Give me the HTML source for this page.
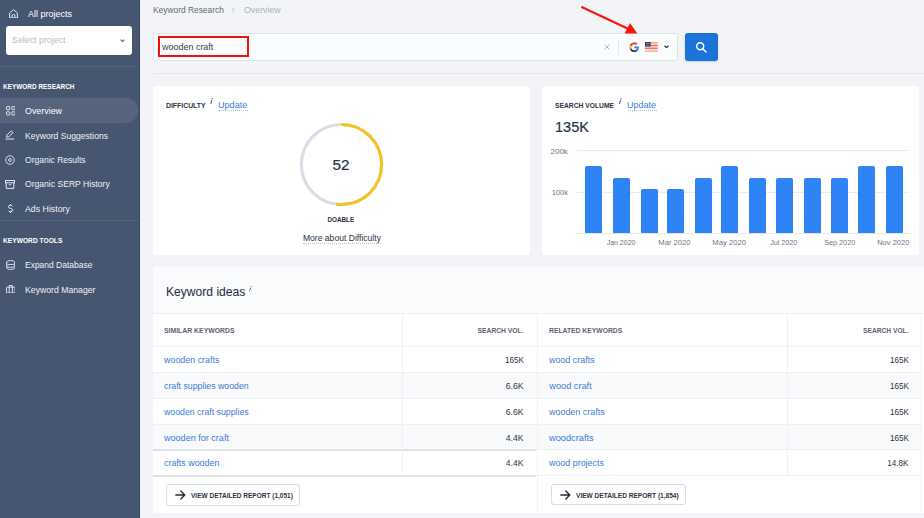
<!DOCTYPE html>
<html><head><meta charset="utf-8">
<style>
*{box-sizing:border-box;margin:0;padding:0}
html,body{width:924px;height:518px;overflow:hidden;background:#f3f4f7;font-family:"Liberation Sans",sans-serif}
.a{position:absolute}
.t{position:absolute;white-space:nowrap;line-height:1}
</style></head><body>
<!-- sidebar -->
<div class="a" style="left:0;top:0;width:139.4px;height:518px;background:#475670"></div>
<div class="a" style="left:139.3px;top:0;width:1.1px;height:518px;background:#3b475c"></div>
<svg class="a" style="left:9.3px;top:8.7px" width="9" height="9.5" viewBox="0 0 9 9.5" fill="none" stroke="#e3e6ec" stroke-width="1" stroke-linejoin="round"><path d="M0.6 3.9 L4.5 0.6 L8.4 3.9 V8.9 H0.6 Z"/><path d="M3.1 8.9 V5.9 Q4.5 4.9 5.9 5.9 V8.9"/></svg>
<div class="a" style="left:5.6px;top:26px;width:126.1px;height:28.5px;background:#fff;border-radius:3px"></div>
<svg class="a" style="left:119.5px;top:38.6px" width="5" height="3.6" viewBox="0 0 5 3.6" fill="none" stroke="#5a6272" stroke-width="1.15"><path d="M0.6 0.6 L2.5 2.6 L4.4 0.6"/></svg>
<div class="a" style="left:0;top:66.2px;width:139.4px;height:1px;background:#55637a"></div>
<div class="a" style="left:0;top:98px;width:138px;height:24.5px;background:#56657d;border-radius:0 12.25px 12.25px 0"></div>
<svg class="a" style="left:5.8px;top:106px" width="9.5" height="9.5" viewBox="0 0 9.5 9.5" fill="none" stroke="#e3e6ec" stroke-width="0.95"><rect x="0.5" y="0.5" width="3.2" height="3.2" rx="0.5"/><rect x="5.8" y="0.5" width="3.2" height="3.2" rx="0.5"/><rect x="0.5" y="5.8" width="3.2" height="3.2" rx="0.5"/><rect x="5.8" y="5.8" width="3.2" height="3.2" rx="0.5"/></svg>
<svg class="a" style="left:5px;top:129.5px" width="10" height="10" viewBox="0 0 10 10" fill="none" stroke="#e3e6ec" stroke-width="1"><path d="M0.5 9 H9"/><path d="M1.5 7 L1.8 5.2 L5.8 1.2 Q6.3 0.8 6.8 1.2 L7.6 2 Q8 2.5 7.6 3 L3.6 7 Z"/></svg>
<svg class="a" style="left:5.4px;top:154.7px" width="10" height="10" viewBox="0 0 10 10" fill="none" stroke="#e3e6ec" stroke-width="0.95"><circle cx="5" cy="5" r="4.2"/><circle cx="5" cy="5" r="1.4"/></svg>
<svg class="a" style="left:5px;top:179.8px" width="10" height="9" viewBox="0 0 10 9" fill="none" stroke="#e3e6ec" stroke-width="1"><rect x="0.5" y="0.5" width="9" height="2.3"/><path d="M1.2 2.8 V8.4 H8.8 V2.8"/><path d="M3.8 4.8 H6.2"/></svg>
<svg class="a" style="left:7px;top:204px" width="7" height="9" viewBox="0 0 7 9" fill="none" stroke="#e3e6ec" stroke-width="1"><path d="M5.6 2.4 Q5.2 1.3 3.5 1.3 Q1.4 1.3 1.4 2.8 Q1.4 4.1 3.5 4.4 Q5.7 4.7 5.7 6.2 Q5.7 7.7 3.5 7.7 Q1.7 7.7 1.2 6.5"/><path d="M3.5 0 V1.3 M3.5 7.7 V9"/></svg>
<div class="a" style="left:0;top:220px;width:139.4px;height:1px;background:#55637a"></div>
<svg class="a" style="left:5.8px;top:259.7px" width="9.4" height="10" viewBox="0 0 9.4 10" fill="none" stroke="#e3e6ec" stroke-width="0.95"><path d="M0.7 2.1 Q0.7 0.6 4.7 0.6 Q8.7 0.6 8.7 2.1 V7.9 Q8.7 9.4 4.7 9.4 Q0.7 9.4 0.7 7.9 Z"/><path d="M0.7 3.4 Q0.7 4.6 4.7 4.6 Q8.7 4.6 8.7 3.4"/><path d="M0.7 6.1 Q0.7 7.3 4.7 7.3 Q8.7 7.3 8.7 6.1"/></svg>
<svg class="a" style="left:5.8px;top:284.9px" width="9.6" height="8.4" viewBox="0 0 9.6 8.4" fill="none" stroke="#e3e6ec" stroke-width="0.95"><rect x="0.5" y="2.2" width="8.6" height="5.7" rx="0.5"/><path d="M3.2 2.2 V0.5 H6.4 V2.2"/><path d="M3.2 2.2 V7.9 M6.4 2.2 V7.9"/></svg>

<!-- top search -->
<svg class="a" style="left:231px;top:7px" width="5" height="6" viewBox="0 0 5 6" fill="none" stroke="#b8bec8" stroke-width="0.9"><path d="M1 0.7 L3.5 3 L1 5.3"/></svg>
<div class="a" style="left:153px;top:33px;width:524.5px;height:28px;background:#fbfcfd;border:1px solid #dfe2e8;border-radius:3px"></div>
<div class="a" style="left:157.6px;top:35.9px;width:91.4px;height:21.2px;border:2px solid #f0100c"></div>
<svg class="a" style="left:604px;top:44px" width="6" height="6" viewBox="0 0 6 6" stroke="#a9afba" stroke-width="0.9"><path d="M0.5 0.5 L5.5 5.5 M5.5 0.5 L0.5 5.5"/></svg>
<div class="a" style="left:618px;top:39px;width:1px;height:16px;background:#e3e6eb"></div>
<svg class="a" style="left:629.2px;top:42.2px" width="10.5" height="10.5" viewBox="0 0 24 24"><path fill="#4285F4" d="M22.6 12.3c0-.8-.1-1.5-.2-2.3H12v4.3h6a5.1 5.1 0 0 1-2.2 3.3v2.8h3.6c2.1-1.9 3.2-4.8 3.2-8.1z"/><path fill="#40475a" d="M12 23c3 0 5.5-1 7.4-2.7l-3.6-2.8c-1 .7-2.3 1.1-3.8 1.1-2.9 0-5.4-2-6.3-4.6H2v2.9A11 11 0 0 0 12 23z"/><path fill="#FBBC05" d="M5.7 14c-.2-.7-.4-1.4-.4-2.1s.1-1.4.4-2.1V7H2a11 11 0 0 0 0 9.9L5.7 14z"/><path fill="#EA4335" d="M12 5.4c1.6 0 3.1.6 4.3 1.7l3.2-3.2A11 11 0 0 0 2 7l3.7 2.9C6.6 7.3 9.1 5.4 12 5.4z"/></svg>
<svg class="a" style="left:645.2px;top:42px" width="12.8" height="9.8" viewBox="0 0 12.8 9.8"><rect width="12.8" height="9.8" fill="#fbe4e0"/><rect y="0" width="12.8" height="1.4" fill="#f4a196"/><rect y="2.8" width="12.8" height="1.4" fill="#f06a5c"/><rect y="5.6" width="12.8" height="1.4" fill="#f26e60"/><rect y="8.4" width="12.8" height="1.4" fill="#f4b0a6"/><rect width="5.6" height="4.6" fill="#2f3d5a"/><rect x="1" y="1.2" width="3.6" height="0.6" fill="#b9c1d0"/><rect x="1" y="2.8" width="3.6" height="0.6" fill="#8f9ab0"/></svg>
<svg class="a" style="left:663.8px;top:44.8px" width="5" height="3.6" viewBox="0 0 5 3.6" fill="none" stroke="#2b3443" stroke-width="1.25"><path d="M0.6 0.7 L2.5 2.6 L4.4 0.7"/></svg>
<div class="a" style="left:685px;top:33px;width:33px;height:28px;background:#1b72d8;border-radius:3px;box-shadow:0 1px 2px rgba(27,114,216,0.25)"></div>
<svg class="a" style="left:694.5px;top:41px" width="13" height="13" viewBox="0 0 13 13" fill="none" stroke="#fff" stroke-width="1.45" stroke-linecap="round"><circle cx="5.2" cy="5.2" r="3.5"/><path d="M7.8 7.8 L11 11"/></svg>
<div class="a" style="left:153px;top:73.2px;width:771px;height:1px;background:#e5e7ec"></div>
<svg class="a" style="left:0;top:0" width="924" height="34" viewBox="0 0 924 34"><path d="M582.2 7.2 L628 28.7" stroke="#f8140a" stroke-width="2.3" stroke-linecap="round"/><path d="M637.3 33.5 L624.6 33.6 L630 23 Z" fill="#f8140a"/></svg>

<!-- cards -->
<div class="a" style="left:153px;top:86.1px;width:376.7px;height:168.6px;background:#fff;border-radius:3px"></div>
<div class="a" style="left:542.3px;top:86.1px;width:376.6px;height:168.6px;background:#fff;border-radius:3px"></div>
<div class="a" style="left:218.5px;top:110px;width:29.5px;height:0;border-top:1px dotted #9fc0ea"></div>
<div class="a" style="left:627.5px;top:110px;width:29.5px;height:0;border-top:1px dotted #9fc0ea"></div>
<svg class="a" style="left:299px;top:122px" width="85" height="85" viewBox="0 0 85 85" fill="none" stroke-width="3"><circle cx="42.5" cy="42.5" r="40.1" stroke="#d9dce5"/><circle cx="42.5" cy="42.5" r="40.1" stroke="#f4c322" stroke-dasharray="131.0 400" transform="rotate(-90 42.5 42.5)"/></svg>
<div class="a" style="left:302.5px;top:243px;width:78px;height:0;border-top:1px dotted #b9c0ca"></div>
<!-- chart -->
<div class="a" style="left:577px;top:150px;width:333px;height:1px;background:#e9ebf0"></div>
<div class="a" style="left:577px;top:191.5px;width:333px;height:1px;background:#e9ebf0"></div>
<div class="a" style="left:577px;top:232.5px;width:333px;height:1px;background:#e3e6ec"></div>
<div class="a" style="left:585.1px;top:165.50px;width:17px;height:67.20px;background:#2e83f6;border-radius:2px 2px 0 0"></div>
<div class="a" style="left:613.0px;top:177.90px;width:17px;height:54.80px;background:#2e83f6;border-radius:2px 2px 0 0"></div>
<div class="a" style="left:641.0px;top:188.60px;width:17px;height:44.10px;background:#2e83f6;border-radius:2px 2px 0 0"></div>
<div class="a" style="left:666.7px;top:188.60px;width:17px;height:44.10px;background:#2e83f6;border-radius:2px 2px 0 0"></div>
<div class="a" style="left:694.5px;top:177.90px;width:17px;height:54.80px;background:#2e83f6;border-radius:2px 2px 0 0"></div>
<div class="a" style="left:721.4px;top:165.50px;width:17px;height:67.20px;background:#2e83f6;border-radius:2px 2px 0 0"></div>
<div class="a" style="left:749.1px;top:177.90px;width:17px;height:54.80px;background:#2e83f6;border-radius:2px 2px 0 0"></div>
<div class="a" style="left:775.5px;top:177.90px;width:17px;height:54.80px;background:#2e83f6;border-radius:2px 2px 0 0"></div>
<div class="a" style="left:803.9px;top:177.90px;width:17px;height:54.80px;background:#2e83f6;border-radius:2px 2px 0 0"></div>
<div class="a" style="left:831.4px;top:177.90px;width:17px;height:54.80px;background:#2e83f6;border-radius:2px 2px 0 0"></div>
<div class="a" style="left:857.6px;top:165.50px;width:17px;height:67.20px;background:#2e83f6;border-radius:2px 2px 0 0"></div>
<div class="a" style="left:886.0px;top:165.50px;width:17px;height:67.20px;background:#2e83f6;border-radius:2px 2px 0 0"></div>

<svg class="a" style="left:0;top:0;overflow:visible" width="1" height="1"><circle cx="212.2" cy="98.6" r="0.6" fill="#3f4858"/><path d="M211.7 100.4 L210.9 103.6" stroke="#3f4858" stroke-width="0.95" stroke-linecap="round"/></svg>
<svg class="a" style="left:0;top:0;overflow:visible" width="1" height="1"><circle cx="621.1" cy="98.6" r="0.6" fill="#3f4858"/><path d="M620.6 100.3 L619.5 103.6" stroke="#3f4858" stroke-width="0.95" stroke-linecap="round"/></svg>
<!-- keyword ideas -->
<div class="a" style="left:153px;top:267.3px;width:771px;height:246px;background:#fff;border-radius:3px 0 0 3px;overflow:hidden">
  <div class="a" style="left:0;top:0;width:771px;height:46px;background:#fafbfc"></div>
</div>
<div class="a" style="left:153px;top:313px;width:771px;height:1px;background:#eff1f5"></div>
<div class="a" style="left:153px;top:372.1px;width:768px;height:26.1px;background:#f9fafc"></div>
<div class="a" style="left:153px;top:424.1px;width:768px;height:25.8px;background:#f9fafc"></div>
<div class="a" style="left:153px;top:345.8px;width:768px;height:1px;background:#eff1f5"></div>
<div class="a" style="left:153px;top:371.6px;width:768px;height:1px;background:#eff1f5"></div>
<div class="a" style="left:153px;top:397.7px;width:768px;height:1px;background:#eff1f5"></div>
<div class="a" style="left:153px;top:423.6px;width:768px;height:1px;background:#eff1f5"></div>
<div class="a" style="left:153px;top:449.4px;width:768px;height:1px;background:#eff1f5"></div>
<div class="a" style="left:537px;top:475.2px;width:384px;height:1px;background:#eff1f5"></div>
<div class="a" style="left:153px;top:448.8px;width:383px;height:2px;background:#dfe2e8"></div>
<div class="a" style="left:153px;top:474.8px;width:383px;height:2px;background:#dfe2e8"></div>
<div class="a" style="left:402px;top:313.5px;width:1px;height:162px;background:#eff1f5"></div>
<div class="a" style="left:536.5px;top:313.5px;width:1px;height:199px;background:#eff1f5"></div>
<div class="a" style="left:786.5px;top:313.5px;width:1px;height:162px;background:#eff1f5"></div>
<div class="a" style="left:920.5px;top:313.5px;width:1px;height:199px;background:#eff1f5"></div>
<div class="a" style="left:165.6px;top:484.3px;width:134.0px;height:21.4px;border:1px solid #d8dce3;border-radius:3px;background:#fff"></div>
<div class="a" style="left:550.9px;top:484.4px;width:134.8px;height:21.0px;border:1px solid #d8dce3;border-radius:3px;background:#fff"></div>
<svg class="a" style="left:175px;top:490px" width="11" height="10" viewBox="0 0 11 10" fill="none" stroke="#1f2a3c" stroke-width="1.3" stroke-linecap="round" stroke-linejoin="round"><path d="M0.8 5 H9.8 M5.8 1 L9.8 5 L5.8 9"/></svg>
<svg class="a" style="left:560.2px;top:490px" width="11" height="10" viewBox="0 0 11 10" fill="none" stroke="#1f2a3c" stroke-width="1.3" stroke-linecap="round" stroke-linejoin="round"><path d="M0.8 5 H9.8 M5.8 1 L9.8 5 L5.8 9"/></svg>
<svg class="a" style="left:0;top:0;overflow:visible" width="1" height="1"><circle cx="251.2" cy="286.4" r="0.5" fill="#3f4858"/><path d="M250.7 288.2 L249.6 290.5" stroke="#3f4858" stroke-width="0.8" stroke-linecap="round"/></svg>

<div class="t" style="top:9.27px;font-size:9.6px;font-weight:normal;color:#ffffff;left:27.80px;transform-origin:0 0;transform:scaleX(0.9372);">All projects</div>
<div class="t" style="top:35.95px;font-size:8.8px;font-weight:normal;color:#b7bcc6;left:11.50px;transform-origin:0 0;transform:scaleX(1.0035);">Select project</div>
<div class="t" style="top:82.74px;font-size:7.4px;font-weight:bold;color:#ffffff;left:2.70px;transform-origin:0 0;transform:scaleX(0.8708);">KEYWORD RESEARCH</div>
<div class="t" style="top:106.07px;font-size:9.6px;font-weight:normal;color:#ffffff;left:24.70px;transform-origin:0 0;transform:scaleX(0.9248);">Overview</div>
<div class="t" style="top:130.54px;font-size:9.4px;font-weight:normal;color:#eef0f4;left:24.80px;transform-origin:0 0;transform:scaleX(0.9151);">Keyword Suggestions</div>
<div class="t" style="top:154.94px;font-size:9.4px;font-weight:normal;color:#eef0f4;left:24.80px;transform-origin:0 0;transform:scaleX(0.9092);">Organic Results</div>
<div class="t" style="top:179.24px;font-size:9.4px;font-weight:normal;color:#eef0f4;left:24.80px;transform-origin:0 0;transform:scaleX(0.9158);">Organic SERP History</div>
<div class="t" style="top:203.84px;font-size:9.4px;font-weight:normal;color:#eef0f4;left:24.80px;transform-origin:0 0;transform:scaleX(0.9364);">Ads History</div>
<div class="t" style="top:236.74px;font-size:7.4px;font-weight:bold;color:#ffffff;left:2.60px;transform-origin:0 0;transform:scaleX(0.8992);">KEYWORD TOOLS</div>
<div class="t" style="top:260.24px;font-size:9.4px;font-weight:normal;color:#eef0f4;left:24.80px;transform-origin:0 0;transform:scaleX(0.9046);">Expand Database</div>
<div class="t" style="top:284.54px;font-size:9.4px;font-weight:normal;color:#eef0f4;left:24.80px;transform-origin:0 0;transform:scaleX(0.9268);">Keyword Manager</div>
<div class="t" style="top:5.62px;font-size:8.6px;font-weight:normal;color:#5f6979;left:153.30px;transform-origin:0 0;transform:scaleX(0.9758);">Keyword Research</div>
<div class="t" style="top:5.62px;font-size:8.6px;font-weight:normal;color:#aab1bd;left:243.90px;transform-origin:0 0;transform:scaleX(1.0240);">Overview</div>
<div class="t" style="top:43.21px;font-size:9.2px;font-weight:normal;color:#343c4b;left:161.90px;transform-origin:0 0;transform:scaleX(0.9758);">wooden craft</div>
<div class="t" style="top:101.50px;font-size:7.8px;font-weight:bold;color:#2b3443;left:165.60px;transform-origin:0 0;transform:scaleX(0.8816);">DIFFICULTY</div>
<div class="t" style="top:99.71px;font-size:9.8px;font-weight:normal;color:#3a7bd5;left:218.40px;transform-origin:0 0;transform:scaleX(0.9272);">Update</div>
<div class="t" style="top:158.13px;font-size:14.5px;font-weight:normal;color:#26314a;left:333.44px;transform-origin:50% 0;transform:scaleX(1.0540);-webkit-text-stroke:0.2px #26314a;">52</div>
<div class="t" style="top:216.38px;font-size:7.0px;font-weight:bold;color:#2b3443;left:326.42px;transform-origin:50% 0;transform:scaleX(0.9068);">DOABLE</div>
<div class="t" style="top:233.58px;font-size:9.0px;font-weight:normal;color:#2b3443;left:300.56px;transform-origin:50% 0;transform:scaleX(0.9527);">More about Difficulty</div>
<div class="t" style="top:101.50px;font-size:7.8px;font-weight:bold;color:#2b3443;left:554.70px;transform-origin:0 0;transform:scaleX(0.8617);">SEARCH VOLUME</div>
<div class="t" style="top:99.71px;font-size:9.8px;font-weight:normal;color:#3a7bd5;left:627.40px;transform-origin:0 0;transform:scaleX(0.9177);">Update</div>
<div class="t" style="top:119.53px;font-size:14.5px;font-weight:normal;color:#26314a;left:554.70px;transform-origin:0 0;transform:scaleX(1.0040);-webkit-text-stroke:0.2px #26314a;">135K</div>
<div class="t" style="top:148.00px;font-size:7.8px;font-weight:normal;color:#6b7485;left:551.08px;transform-origin:100% 0;transform:scaleX(1.0346);">200k</div>
<div class="t" style="top:189.40px;font-size:7.8px;font-weight:normal;color:#6b7485;left:551.08px;transform-origin:100% 0;transform:scaleX(0.9577);">100k</div>
<div class="t" style="top:238.50px;font-size:7.8px;font-weight:normal;color:#6b7485;left:605.05px;transform-origin:50% 0;transform:scaleX(0.8973);">Jan 2020</div>
<div class="t" style="top:238.50px;font-size:7.8px;font-weight:normal;color:#6b7485;left:658.42px;transform-origin:50% 0;transform:scaleX(0.9802);">Mar 2020</div>
<div class="t" style="top:238.50px;font-size:7.8px;font-weight:normal;color:#6b7485;left:712.27px;transform-origin:50% 0;transform:scaleX(0.9838);">May 2020</div>
<div class="t" style="top:238.50px;font-size:7.8px;font-weight:normal;color:#6b7485;left:769.45px;transform-origin:50% 0;transform:scaleX(0.9190);">Jul 2020</div>
<div class="t" style="top:238.50px;font-size:7.8px;font-weight:normal;color:#6b7485;left:822.80px;transform-origin:50% 0;transform:scaleX(0.9312);">Sep 2020</div>
<div class="t" style="top:238.50px;font-size:7.8px;font-weight:normal;color:#6b7485;left:876.41px;transform-origin:100% 0;transform:scaleX(0.9644);">Nov 2020</div>
<div class="t" style="top:284.80px;font-size:13.0px;font-weight:normal;color:#1f2a3c;left:165.90px;transform-origin:0 0;transform:scaleX(0.9300);">Keyword ideas</div>
<div class="t" style="top:326.74px;font-size:7.4px;font-weight:bold;color:#596376;left:164.40px;transform-origin:0 0;transform:scaleX(0.9283);">SIMILAR KEYWORDS</div>
<div class="t" style="top:326.74px;font-size:7.4px;font-weight:bold;color:#596376;left:473.43px;transform-origin:100% 0;transform:scaleX(0.9096);">SEARCH VOL.</div>
<div class="t" style="top:326.74px;font-size:7.4px;font-weight:bold;color:#596376;left:549.30px;transform-origin:0 0;transform:scaleX(0.9159);">RELATED KEYWORDS</div>
<div class="t" style="top:326.74px;font-size:7.4px;font-weight:bold;color:#596376;left:858.13px;transform-origin:100% 0;transform:scaleX(0.8997);">SEARCH VOL.</div>
<div class="t" style="top:355.81px;font-size:9.2px;font-weight:normal;color:#3a7bd5;left:164.30px;transform-origin:0 0;transform:scaleX(0.9690);">wooden crafts</div>
<div class="t" style="top:355.98px;font-size:9.0px;font-weight:normal;color:#2b3443;left:502.98px;transform-origin:100% 0;transform:scaleX(0.9039);">165K</div>
<div class="t" style="top:381.61px;font-size:9.2px;font-weight:normal;color:#3a7bd5;left:164.30px;transform-origin:0 0;transform:scaleX(0.9529);">craft supplies wooden</div>
<div class="t" style="top:381.78px;font-size:9.0px;font-weight:normal;color:#2b3443;left:505.49px;transform-origin:100% 0;transform:scaleX(0.9614);">6.6K</div>
<div class="t" style="top:407.61px;font-size:9.2px;font-weight:normal;color:#3a7bd5;left:164.30px;transform-origin:0 0;transform:scaleX(0.9529);">wooden craft supplies</div>
<div class="t" style="top:407.78px;font-size:9.0px;font-weight:normal;color:#2b3443;left:505.49px;transform-origin:100% 0;transform:scaleX(0.9614);">6.6K</div>
<div class="t" style="top:433.51px;font-size:9.2px;font-weight:normal;color:#3a7bd5;left:164.30px;transform-origin:0 0;transform:scaleX(0.9853);">wooden for craft</div>
<div class="t" style="top:433.68px;font-size:9.0px;font-weight:normal;color:#2b3443;left:505.49px;transform-origin:100% 0;transform:scaleX(0.9560);">4.4K</div>
<div class="t" style="top:459.11px;font-size:9.2px;font-weight:normal;color:#3a7bd5;left:164.30px;transform-origin:0 0;transform:scaleX(0.9690);">crafts wooden</div>
<div class="t" style="top:459.28px;font-size:9.0px;font-weight:normal;color:#2b3443;left:505.49px;transform-origin:100% 0;transform:scaleX(0.9560);">4.4K</div>
<div class="t" style="top:355.81px;font-size:9.2px;font-weight:normal;color:#3a7bd5;left:549.30px;transform-origin:0 0;transform:scaleX(0.9715);">wood crafts</div>
<div class="t" style="top:355.98px;font-size:9.0px;font-weight:normal;color:#2b3443;left:887.68px;transform-origin:100% 0;transform:scaleX(0.9039);">165K</div>
<div class="t" style="top:381.61px;font-size:9.2px;font-weight:normal;color:#3a7bd5;left:549.30px;transform-origin:0 0;">wood craft</div>
<div class="t" style="top:381.78px;font-size:9.0px;font-weight:normal;color:#2b3443;left:887.68px;transform-origin:100% 0;transform:scaleX(0.9039);">165K</div>
<div class="t" style="top:407.61px;font-size:9.2px;font-weight:normal;color:#3a7bd5;left:549.30px;transform-origin:0 0;transform:scaleX(0.9725);">wooden crafts</div>
<div class="t" style="top:407.78px;font-size:9.0px;font-weight:normal;color:#2b3443;left:887.68px;transform-origin:100% 0;transform:scaleX(0.9039);">165K</div>
<div class="t" style="top:433.51px;font-size:9.2px;font-weight:normal;color:#3a7bd5;left:549.30px;transform-origin:0 0;transform:scaleX(1.0071);">woodcrafts</div>
<div class="t" style="top:433.68px;font-size:9.0px;font-weight:normal;color:#2b3443;left:887.68px;transform-origin:100% 0;transform:scaleX(0.9039);">165K</div>
<div class="t" style="top:459.11px;font-size:9.2px;font-weight:normal;color:#3a7bd5;left:549.30px;transform-origin:0 0;transform:scaleX(0.9689);">wood projects</div>
<div class="t" style="top:459.28px;font-size:9.0px;font-weight:normal;color:#2b3443;left:885.18px;transform-origin:100% 0;transform:scaleX(0.9014);">14.8K</div>
<div class="t" style="top:491.74px;font-size:7.4px;font-weight:bold;color:#2b3443;left:190.50px;transform-origin:0 0;transform:scaleX(0.8807);">VIEW DETAILED REPORT (1,051)</div>
<div class="t" style="top:491.74px;font-size:7.4px;font-weight:bold;color:#2b3443;left:575.80px;transform-origin:0 0;transform:scaleX(0.8876);">VIEW DETAILED REPORT (1,854)</div>
</body></html>
